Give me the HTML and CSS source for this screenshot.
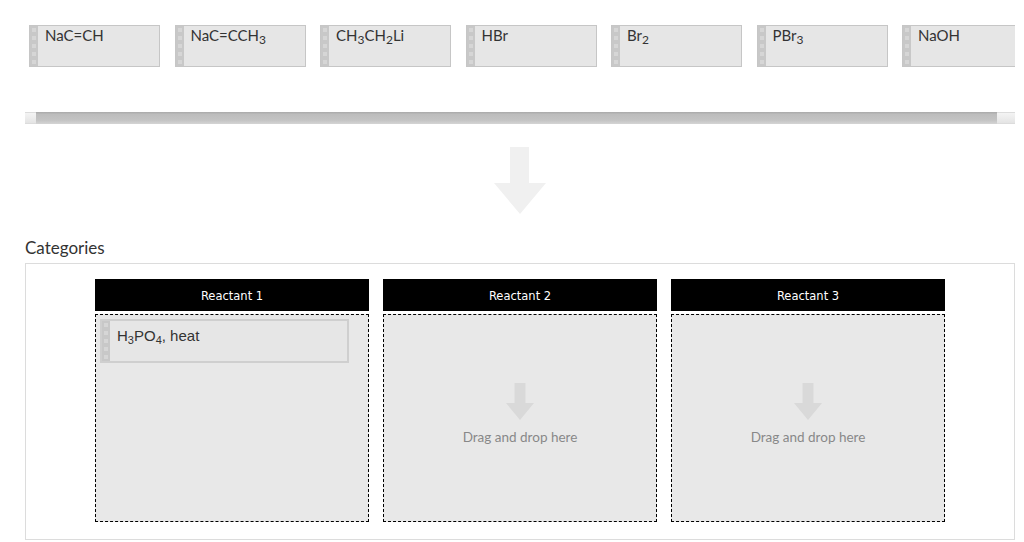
FILE: index.html
```html
<!DOCTYPE html>
<html>
<head>
<meta charset="utf-8">
<link rel="stylesheet" href="styles.css">
</head>
<body>
<div class="page">
  <div class="pool">
    <div class="pool-track">
      <div class="card"><span class="grip"></span><span class="label">NaC=CH</span></div>
      <div class="card"><span class="grip"></span><span class="label">NaC=CCH<sub>3</sub></span></div>
      <div class="card"><span class="grip"></span><span class="label">CH<sub>3</sub>CH<sub>2</sub>Li</span></div>
      <div class="card"><span class="grip"></span><span class="label">HBr</span></div>
      <div class="card"><span class="grip"></span><span class="label">Br<sub>2</sub></span></div>
      <div class="card"><span class="grip"></span><span class="label">PBr<sub>3</sub></span></div>
      <div class="card"><span class="grip"></span><span class="label">NaOH</span></div>
    </div>
  </div>
  <div class="scrollbar">
    <div class="sb-btn"></div>
    <div class="sb-thumb"></div>
    <div class="sb-btn sb-right"></div>
  </div>
  <div class="big-arrow">
    <svg width="52" height="67" viewBox="0 0 52 67"><path d="M16 0H35V36H52L26 67L0 36H16Z" fill="#f0f0f0"/></svg>
  </div>
  <h2 class="cat-title">Categories</h2>
  <div class="cat-box">
    <div class="cols">
      <div class="col">
        <div class="col-head">Reactant 1</div>
        <div class="zone">
          <div class="card card-in"><span class="grip"></span><span class="label label-arial">H<sub>3</sub>PO<sub>4</sub>, heat</span></div>
        </div>
      </div>
      <div class="col">
        <div class="col-head">Reactant 2</div>
        <div class="zone zone-empty">
          <svg width="28" height="37" viewBox="0 0 28 37"><path d="M8.5 0H19.5V20H28L14 37L0 20H8.5Z" fill="#d9d9d9"/></svg>
          <div class="hint">Drag and drop here</div>
        </div>
      </div>
      <div class="col">
        <div class="col-head">Reactant 3</div>
        <div class="zone zone-empty">
          <svg width="28" height="37" viewBox="0 0 28 37"><path d="M8.5 0H19.5V20H28L14 37L0 20H8.5Z" fill="#d9d9d9"/></svg>
          <div class="hint">Drag and drop here</div>
        </div>
      </div>
    </div>
  </div>
</div>
</body>
</html>
```
FILE: styles.css
```css
html, body {
  margin: 0;
  padding: 0;
  background: #fff;
}
body {
  font-family: Lato, "Liberation Sans", sans-serif;
  color: #333;
}
.page {
  width: 990px;
  margin-left: 25px;
  padding-top: 25px;
}
.pool {
  overflow: hidden;
  width: 990px;
}
.pool-track {
  display: flex;
  gap: 14.5px;
  padding-left: 4px;
  width: max-content;
}
.card {
  box-sizing: border-box;
  width: 131px;
  height: 42px;
  background: #e6e6e6;
  border: 1px solid #c6c6c6;
  display: flex;
  align-items: flex-start;
  flex-shrink: 0;
}
.grip {
  width: 8px;
  align-self: stretch;
  flex-shrink: 0;
  background-color: #c8c8c8;
  background-image: repeating-linear-gradient(to bottom, transparent 0, transparent 2px, #d6d6d6 2px, #d6d6d6 6px, transparent 6px, transparent 8px);
  background-size: 4px 100%;
  background-position: 2px 0;
  background-repeat: no-repeat;
}
.label {
  font-family: Lato, sans-serif;
  font-size: 15px;
  line-height: 18px;
  padding: 0 0 0 7px;
  color: #333;
  white-space: nowrap;
}
sub {
  font-size: 12px;
  vertical-align: -3px;
  line-height: 0;
}
.scrollbar {
  margin-top: 45px;
  height: 12px;
  display: flex;
  width: 990px;
}
.sb-btn {
  width: 11px;
  background: linear-gradient(to bottom, #f4f4f4, #e4e4e4);
  border-top: 1px solid #dcdcdc;
  border-bottom: 1px solid #dcdcdc;
  box-sizing: border-box;
}
.sb-right {
  width: 18px;
}
.sb-thumb {
  flex: 1;
  background: linear-gradient(to bottom, #a9a9a9 0, #bdbdbd 20%, #c4c4c4 70%, #d4d4d4 100%);
}
.big-arrow {
  display: flex;
  justify-content: center;
  margin-top: 23px;
  height: 67px;
  width: 990px;
}
.big-arrow svg {
  display: block;
}
.cat-title {
  margin: 24px 0 0 0;
  font-family: Lato, sans-serif;
  font-size: 17px;
  font-weight: normal;
  line-height: 20px;
  color: #333;
}
.cat-box {
  margin-top: 5px;
  box-sizing: border-box;
  width: 990px;
  height: 277px;
  border: 1px solid #dcdcdc;
  padding-top: 15px;
}
.cols {
  display: flex;
  justify-content: center;
  gap: 14px;
}
.col {
  width: 274px;
}
.col-head {
  height: 32px;
  background: #000;
  color: #fff;
  font-family: "DejaVu Sans", sans-serif;
  font-size: 11.5px;
  line-height: 34px;
  text-align: center;
}
.zone {
  margin-top: 3px;
  box-sizing: border-box;
  height: 208px;
  background: #e8e8e8;
  border: 1px dashed #000;
  padding: 4px;
}
.zone-empty {
  display: flex;
  flex-direction: column;
  align-items: center;
  padding-top: 68px;
}
.zone-empty svg {
  display: block;
}
.hint {
  margin-top: 9px;
  font-family: Lato, sans-serif;
  font-size: 13.5px;
  color: #888;
}
.card-in {
  width: 249px;
  height: 44px;
  border: 2px solid #cfcfcf;
}
.label-arial {
  font-family: "Liberation Sans", Arial, sans-serif;
  font-size: 15px;
  padding-top: 6px;
  padding-left: 7px;
}
.label-arial sub {
  font-size: 11px;
}
```
